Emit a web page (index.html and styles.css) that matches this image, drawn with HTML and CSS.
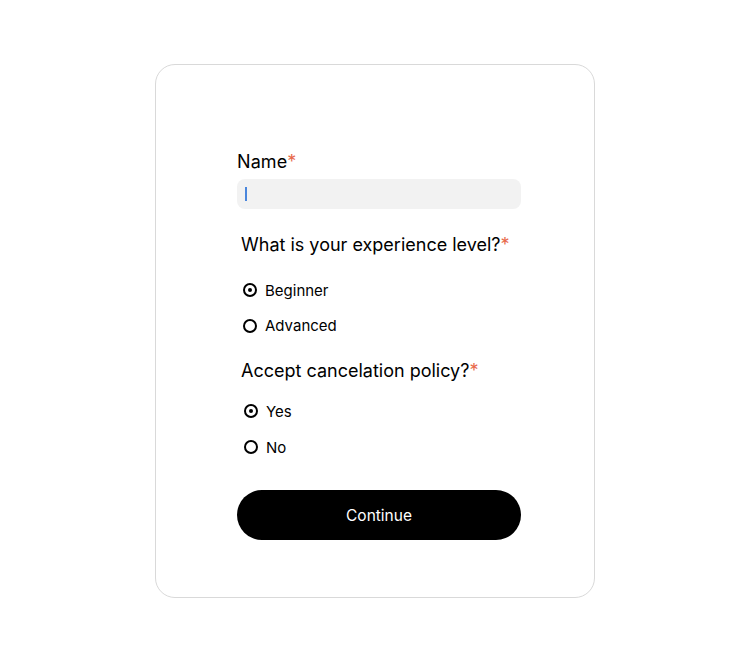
FILE: index.html
```html
<!DOCTYPE html>
<html lang="en">
<head>
<meta charset="utf-8">
<title>Form</title>
<link rel="stylesheet" href="styles.css">
</head>
<body>
<main class="card">
  <form class="form">
    <label class="label">Name<span class="req">*</span></label>
    <div class="input"><span class="caret"></span></div>

    <div class="group group-1">
      <div class="question">What is your experience level?<span class="req">*</span></div>
      <label class="option"><span class="radio checked"></span><span>Beginner</span></label>
      <label class="option"><span class="radio"></span><span>Advanced</span></label>
    </div>

    <div class="group group-2">
      <div class="question">Accept cancelation policy?<span class="req">*</span></div>
      <label class="option"><span class="radio checked"></span><span>Yes</span></label>
      <label class="option"><span class="radio"></span><span>No</span></label>
    </div>

    <button type="button" class="btn">Continue</button>
  </form>
</main>
</body>
</html>
```
FILE: styles.css
```css
html, body {
  margin: 0;
  padding: 0;
  background: #ffffff;
}
body {
  font-family: Inter, "Noto Sans", "Liberation Sans", sans-serif;
  color: #000;
  display: flex;
  justify-content: center;
  padding-top: 64px;
}
.card {
  box-sizing: border-box;
  width: 440px;
  height: 534px;
  border: 1px solid #d9d9d9;
  border-radius: 20px;
  padding: 86px 0 0 81px;
}
.form {
  width: 284px;
  display: flex;
  flex-direction: column;
}
.label {
  font-size: 18px;
  line-height: 22px;
  letter-spacing: 0.1px;
}
.req {
  color: #e8694b;
}
.input {
  margin-top: 6px;
  height: 30px;
  border-radius: 8px;
  background: #f2f2f2;
  display: flex;
  align-items: center;
  padding-left: 8px;
}
.caret {
  width: 1.5px;
  height: 14px;
  background: #4a86dc;
}
.group {
  display: flex;
  flex-direction: column;
}
.question {
  font-size: 18px;
  line-height: 24px;
  letter-spacing: 0;
  padding-left: 4px;
}
.group-1 {
  margin-top: 24px;
}
.group-1 .question {
  margin-bottom: 15px;
}
.group-2 {
  margin-top: 16px;
}
.group-2 .question {
  margin-bottom: 10px;
}
.option {
  height: 36px;
  display: flex;
  align-items: center;
  gap: 8px;
  font-size: 15px;
}
.group-1 .option {
  padding-left: 6px;
}
.group-2 .option {
  padding-left: 7px;
}
.group-1 .option + .option {
  height: 35px;
}
.radio {
  box-sizing: border-box;
  width: 14px;
  height: 14px;
  border: 2px solid #000;
  border-radius: 50%;
  display: flex;
  align-items: center;
  justify-content: center;
}
.radio.checked::after {
  content: "";
  width: 4px;
  height: 4px;
  border-radius: 50%;
  background: #000;
}
.btn {
  margin-top: 25px;
  height: 50px;
  border: none;
  border-radius: 25px;
  background: #000;
  color: #fff;
  font-family: inherit;
  font-size: 15.5px;
  cursor: pointer;
}
```
